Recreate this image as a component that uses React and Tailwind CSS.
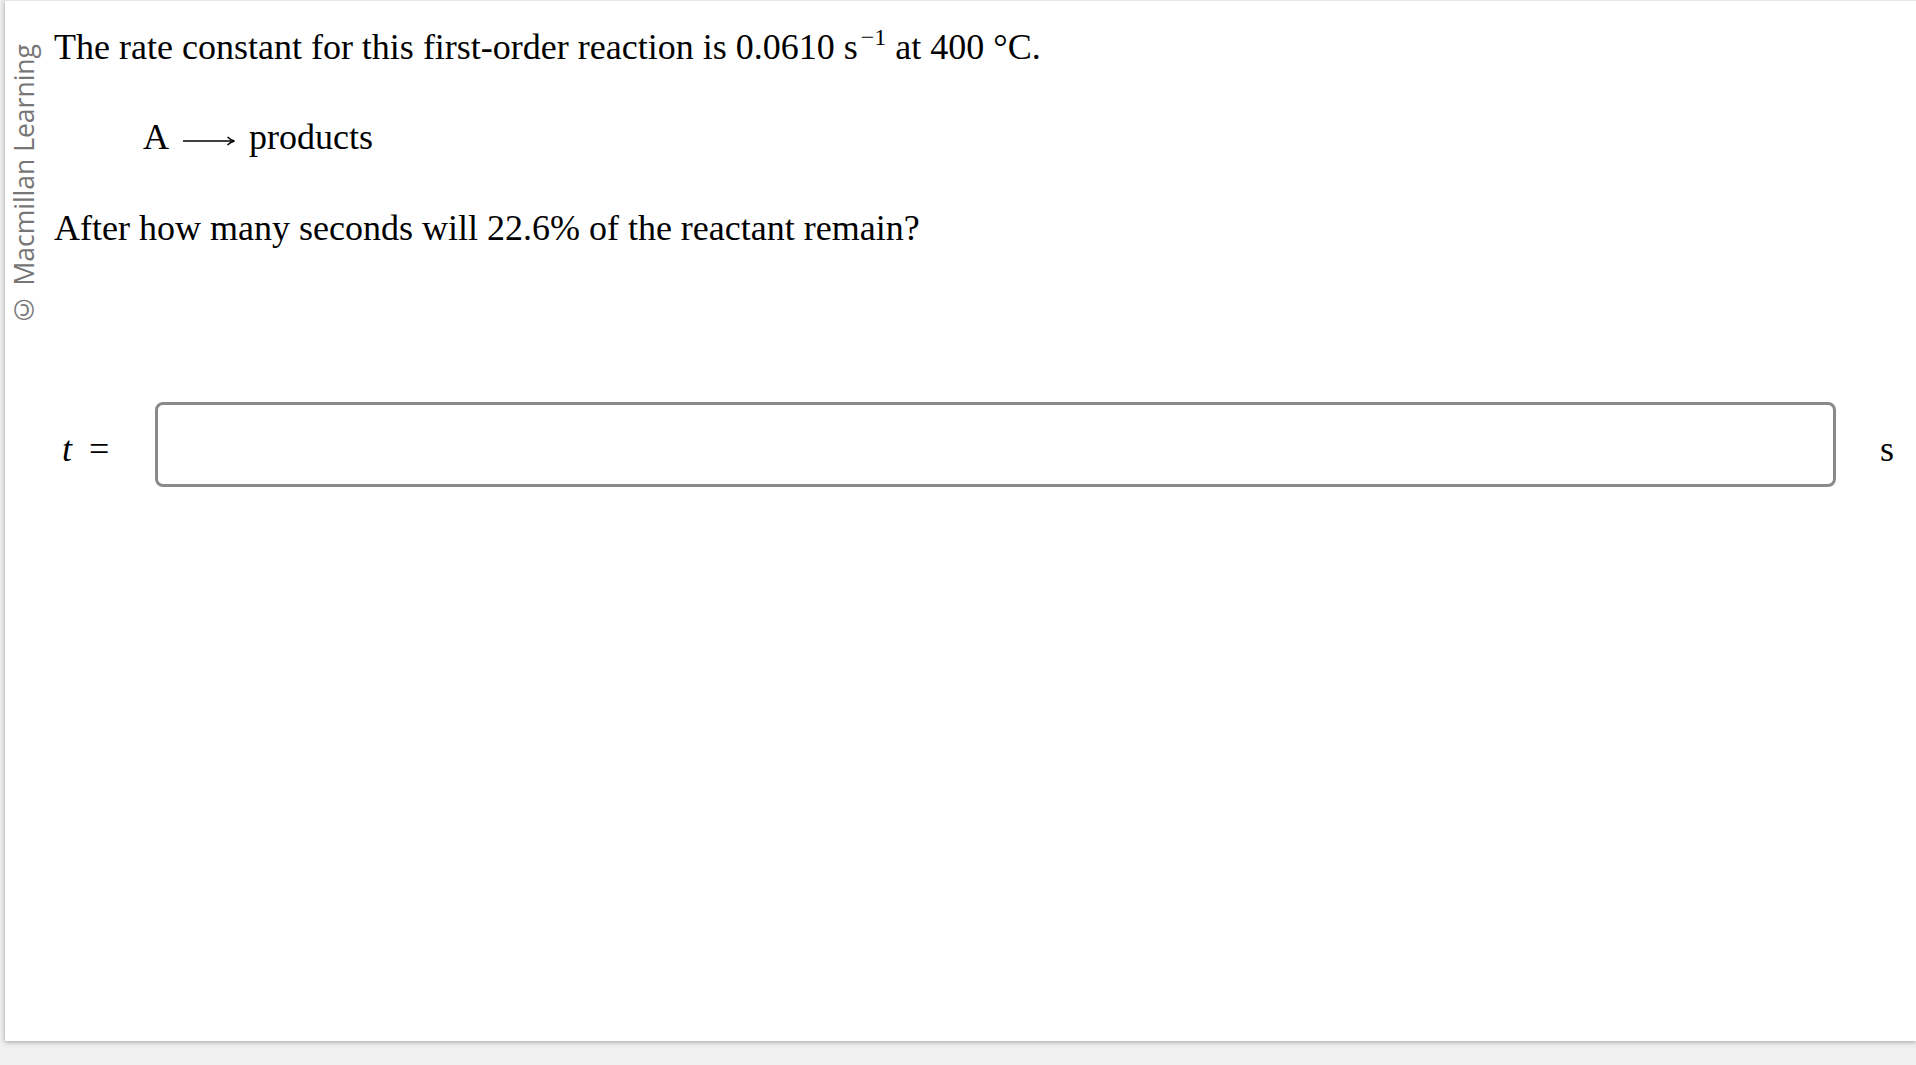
import React from 'react';

const Arrow = () => (
  <svg
    width="52"
    height="16"
    viewBox="0 0 52 16"
    className="inline-block align-baseline ml-[14px] mr-[14px]"
  >
    <path d="M0 8 H51" stroke="#000" strokeWidth="1.5" fill="none" />
    <path d="M44.5 4 Q47.5 7 51.5 8 Q47.5 9 44.5 12" stroke="#000" strokeWidth="1.4" fill="none" />
  </svg>
);

const App = () => {
  return (
    <div className="h-[1065px] w-full bg-[#f0f0f0] overflow-hidden">
      <div className="ml-[5px] h-[1041px] w-[1911px] bg-white border-t border-[#e6e6e6] shadow-[0_1px_5px_rgba(0,0,0,0.35)] flex">
        {/* copyright strip */}
        <div className="w-[49px] shrink-0 pt-[43px]">
          <div className="[writing-mode:vertical-rl] rotate-180 whitespace-nowrap text-[26.5px] text-[#767676] font-['Open_Sans',sans-serif]">
            © Macmillan Learning
          </div>
        </div>

        {/* question */}
        <div className="flex-1 font-['Liberation_Serif','Times_New_Roman',serif] text-[36px] leading-[44px] text-black">
          <p className="mt-[24px] whitespace-nowrap">
            The rate constant for this first-order reaction is 0.0610 s
            <span className="text-[24px] leading-none align-[14px] ml-[3px]">−1</span> at 400 °C.
          </p>

          <p className="mt-[46px] pl-[89px] whitespace-nowrap">
            <span>A</span>
            <Arrow />
            <span>products</span>
          </p>

          <p className="mt-[47px] whitespace-nowrap">
            After how many seconds will 22.6% of the reactant remain?
          </p>

          <div className="mt-[152px] flex items-center">
            <div className="w-[101px] shrink-0 pl-[8px] mt-[9px] whitespace-nowrap">
              <i>t</i>
              <span className="ml-[17px]">=</span>
            </div>
            <input
              type="text"
              className="w-[1681px] h-[85px] shrink-0 border-[3px] border-[#8a8a8a] rounded-[8px] bg-white outline-none px-3 text-[28px]"
            />
            <div className="ml-[44px] mt-[9px]">s</div>
          </div>
        </div>
      </div>
    </div>
  );
};

export default App;
